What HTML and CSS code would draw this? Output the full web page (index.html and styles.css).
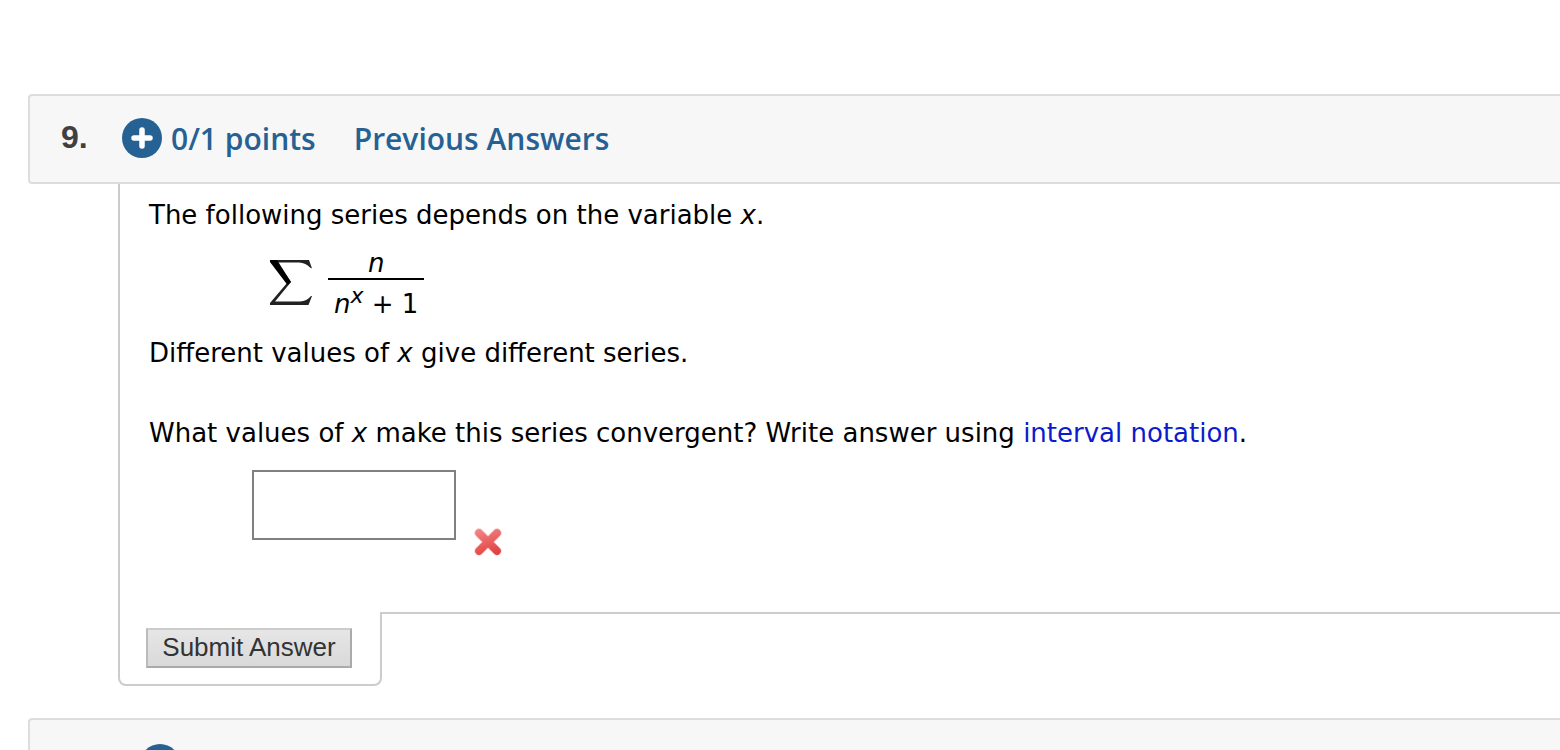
FILE: index.html
```html
<!DOCTYPE html>
<html lang="en">
<head>
<meta charset="utf-8">
<title>Question 9</title>
<link rel="stylesheet" href="styles.css">
</head>
<body>
<main class="page">
  <section class="question">
    <header class="question-bar">
      <h2 class="question-number">9.</h2>
      <a class="points" href="#points">
        <svg class="plus-icon" viewBox="0 0 40 40" aria-hidden="true">
          <circle cx="20" cy="20" r="20" fill="#266194"/>
          <path d="M20 12V28M12 20H28" stroke="#fff" stroke-width="5.5" stroke-linecap="round"/>
        </svg>
        <span>0/1 points</span>
      </a>
      <a class="previous" href="#previous">Previous Answers</a>
    </header>
    <form class="question-body">
      <div class="content">
        <p class="line">The following series depends on the variable <i>x</i>.</p>
        <div class="formula">
          <svg class="sigma" viewBox="0 0 44 48" role="img" aria-label="Sum">
            <defs>
              <filter id="soft" x="-10%" y="-10%" width="120%" height="120%"><feGaussianBlur stdDeviation=".7"/></filter>
            </defs>
            <g filter="url(#soft)">
              <path d="M1 1H40L43 9.500L41 8.500Q37 4 30 3.500H8L22 23L6 42.500H31Q38 42 42 37H43L39.500 46H1V44L18 24L1 2Z" fill="#222"/>
              <path d="M1 1H8L22 23L18.500 26L1 3Z" fill="#000"/>
            </g>
          </svg>
          <div class="fraction">
            <span class="numerator"><i>n</i></span>
            <span class="denominator"><i>n</i><sup><i>x</i></sup> + 1</span>
          </div>
        </div>
        <p class="line">Different values of <i>x</i> give different series.</p>
        <p class="line prompt"><label for="answer">What values of <i>x</i> make this series convergent? Write answer using</label> <a class="term" href="#interval-notation">interval notation</a>.</p>
        <div class="answer-row">
          <input class="answer" id="answer" type="text">
          <svg class="wrong" viewBox="0 0 28 28" role="img" aria-label="Incorrect">
            <defs>
              <linearGradient id="cross-fill" gradientUnits="userSpaceOnUse" x1="8" y1="0" x2="18" y2="28">
                <stop offset="0" stop-color="#f18787"/>
                <stop offset=".5" stop-color="#ea6060"/>
                <stop offset="1" stop-color="#de3f3f"/>
              </linearGradient>
            </defs>
            <path d="M5 5L23 23M23 5L5 23" stroke="#fbcaca" stroke-width="9.500" stroke-linecap="round"/>
            <path d="M5 5L23 23M23 5L5 23" stroke="url(#cross-fill)" stroke-width="7.500" stroke-linecap="round"/>
          </svg>
        </div>
      </div>
      <div class="footer">
        <div class="submit-tab"><button class="submit" type="button">Submit Answer</button></div>
        <div class="footer-rule"></div>
      </div>
    </form>
  </section>
  <section class="question">
    <header class="question-bar next">
      <svg class="plus-icon" viewBox="0 0 40 40" aria-hidden="true">
        <circle cx="20" cy="20" r="20" fill="#266194"/>
        <path d="M20 12V28M12 20H28" stroke="#fff" stroke-width="5.5" stroke-linecap="round"/>
      </svg>
    </header>
  </section>
</main>
</body>
</html>
```
FILE: styles.css
```css
* {
  box-sizing: border-box;
}

body {
  margin: 0;
  background: #fff;
  color: #000;
  font-family: Verdana, "DejaVu Sans", sans-serif;
  font-size: 26px;
}

.page {
  display: flex;
  flex-direction: column;
  gap: 32px;
  height: 100vh;
  padding: 94px 0 0 28px;
  overflow: hidden;
}

.question {
  flex: none;
}

.question-bar {
  display: flex;
  align-items: center;
  min-height: 90px;
  padding: 0 0 2px 31px;
  border: 2px solid #ddd;
  border-right: 0;
  border-radius: 4px 0 0 4px;
  background: #f7f7f7;
  color: #266194;
  font-family: "Open Sans", "Noto Sans", sans-serif;
  font-size: 30px;
  font-weight: 600;
}

.question-number {
  width: 61px;
  margin: 0;
  padding-bottom: 2px;
  color: #404040;
  font-family: Arial, "Liberation Sans", sans-serif;
  font-size: 32px;
}

.question-bar a {
  color: inherit;
  text-decoration: none;
}

.points {
  display: flex;
  align-items: center;
  gap: 9px;
  margin-right: 38px;
}

.plus-icon {
  width: 40px;
  height: 40px;
}

.next {
  padding: 2px 0 0 110px;
}

.question-body {
  margin: 0 0 0 90px;
}

.content {
  padding: 11px 0 56px 29px;
  border-left: 2px solid #ccc;
}

.line {
  margin: 0;
  line-height: 40px;
}

.formula {
  display: flex;
  align-items: center;
  gap: 15px;
  padding: 15px 0 17px 120px;
}

.sigma {
  width: 44px;
  height: 48px;
}

.fraction {
  display: flex;
  flex-direction: column;
  text-align: center;
}

.numerator {
  height: 30px;
  border-bottom: 2px solid #000;
  line-height: 26px;
}

.denominator {
  height: 36px;
  padding: 0 6px;
  line-height: 48px;
}

.denominator sup {
  font-size: 22px;
  line-height: 0;
}

.prompt {
  margin-top: 40px;
}

.term {
  color: #0c1bcc;
  text-decoration: none;
}

.answer-row {
  display: flex;
  align-items: flex-end;
  gap: 18px;
  padding: 17px 0 0 103px;
}

.answer {
  width: 204px;
  height: 70px;
  margin-bottom: 16px;
  padding: 4px 8px;
  border: 2px solid #808080;
  border-radius: 0;
  background: #fff;
  font: inherit;
}

.wrong {
  width: 28px;
  height: 28px;
  overflow: visible;
}

.footer {
  display: flex;
}

.submit-tab {
  padding: 16px 28px 16px 26px;
  border: 2px solid #ccc;
  border-top: 0;
  border-radius: 0 0 8px 8px;
}

.footer-rule {
  flex: 1;
  border-top: 2px solid #ccc;
  margin-left: -2px;
}

.submit {
  display: block;
  width: 206px;
  height: 40px;
  padding: 0 0 2px;
  border: 2px solid;
  border-color: #ccc #aaa #aaa #bbb;
  border-radius: 0;
  background: linear-gradient(#e6e6e6, #d9d9d9);
  color: #333;
  font: 26px Arial, "Liberation Sans", sans-serif;
}
```
